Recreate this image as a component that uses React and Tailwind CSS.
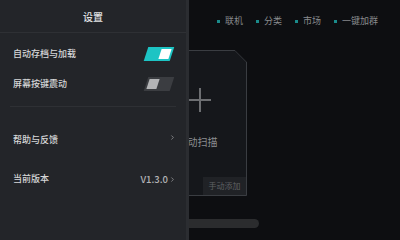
import { ChevronRight } from 'lucide-react';

const font = { fontFamily: '"Noto Sans CJK SC", "Noto Sans", sans-serif' };

function Toggle({ on }) {
  return (
    <div
      className={`w-[26px] h-[14px] skew-x-[-18deg] p-[2px] flex ${on ? 'bg-[#1dc4c4] justify-end' : 'bg-[#3b3d41] justify-start'}`}
    >
      <div className={`w-[10px] h-full ${on ? 'bg-white' : 'bg-[#b3b4b6]'}`} />
    </div>
  );
}

function NavItem({ label }) {
  return (
    <div className="flex items-center gap-[5px]">
      <span className="w-[3px] h-[3px] bg-[#1a8b8b]" />
      <span>{label}</span>
    </div>
  );
}

export default function App() {
  return (
    <div className="relative w-[400px] h-[240px] overflow-hidden bg-[#0d0e11] text-[#d6d7d8]" style={font}>
      {/* page behind the drawer */}
      <div className="flex flex-col h-full">
        <div className="flex gap-[13px] pl-[217px] pt-[13px] text-[9px] leading-[16px] text-[#898b8e]">
          <NavItem label="联机" />
          <NavItem label="分类" />
          <NavItem label="市场" />
          <NavItem label="一键加群" />
        </div>
        <div className="relative ml-[150px] mt-[21px] w-[97px] h-[146px] bg-[#15171b] [clip-path:polygon(0_0,85px_0,97px_12px,97px_100%,0_100%)]">
          <svg className="absolute inset-0" width="97" height="146">
            <path d="M0.5 0.5 H85 L96.5 12 V145.5 H0.5 Z" fill="none" stroke="#3a3d42" strokeWidth="1" />
          </svg>
          <div className="flex flex-col items-center pl-[2px] pt-[38px] relative">
            <div className="relative w-[22px] h-[24px]">
              <div className="absolute left-0 right-0 top-[11px] h-[2px] bg-[#6c6e71]" />
              <div className="absolute top-0 bottom-0 left-[10px] w-[2px] bg-[#6c6e71]" />
            </div>
            <div className="mt-[22px] -ml-[4px] text-[10px] leading-[16px] text-[#8b8d90]">自动扫描</div>
          </div>
          <div className="absolute right-[1px] bottom-[1px] w-[43px] h-[18px] bg-[#202226] text-[8px] leading-[18px] text-center text-[#5f6164]">
            手动添加
          </div>
        </div>
        <div className="mt-[23px] ml-[120px] w-[139px] h-[9px] rounded-full bg-[#2b2c2e]" />
      </div>

      {/* settings drawer */}
      <div className="absolute left-0 top-0 bottom-0 w-[189px] bg-[#232529] border-r-[3px] border-[#2b2d31] flex flex-col">
        <div className="h-[33px] flex items-center justify-center text-[10px] font-medium text-[#e2e3e4] border-b border-[#2e3034]">
          设置
        </div>
        <div className="flex items-center justify-between pl-[13px] pr-[14px] mt-[13px] h-[16px] text-[9px] font-medium">
          <span>自动存档与加载</span>
          <Toggle on />
        </div>
        <div className="flex items-center justify-between pl-[13px] pr-[14px] mt-[14px] h-[16px] text-[9px] font-medium">
          <span>屏幕按键震动</span>
          <Toggle />
        </div>
        <div className="mx-[10px] mt-[14px] border-t border-[#2e3034]" />
        <div className="flex items-center justify-between pl-[13px] pr-[10px] mt-[25px] h-[16px] text-[9px] font-medium">
          <span>帮助与反馈</span>
          <ChevronRight size={7} strokeWidth={2} className="text-[#b8b9ba] -mt-[6px]" />
        </div>
        <div className="flex items-center justify-between pl-[13px] pr-[10px] mt-[23px] h-[16px] text-[9px] font-medium">
          <span>当前版本</span>
          <span className="flex items-center gap-[1px] text-[9.5px] text-[#b3b4b6]">
            V1.3.0
            <ChevronRight size={7} strokeWidth={2} className="text-[#b8b9ba]" />
          </span>
        </div>
      </div>
    </div>
  );
}
